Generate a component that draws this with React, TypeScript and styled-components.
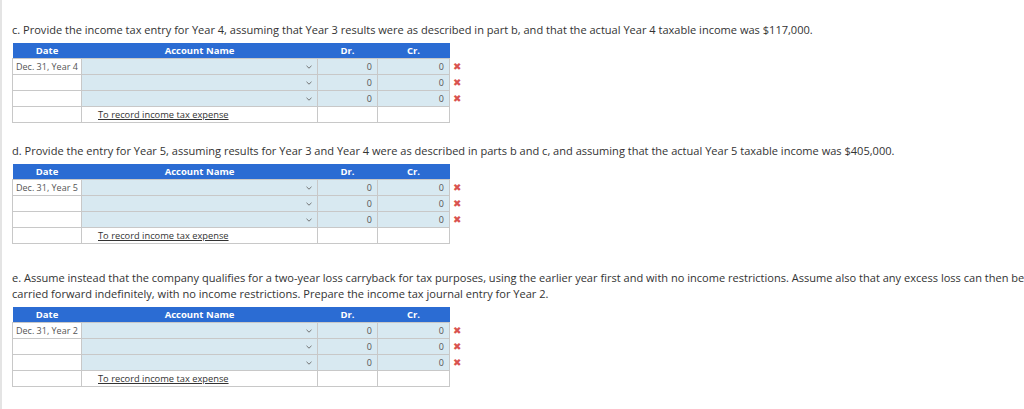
import React from 'react';
import styled, {createGlobalStyle} from 'styled-components';

const GlobalStyle = createGlobalStyle`
  html, body {
    margin: 0;
    padding: 0;
    overflow: hidden;
    background: #fff;
  }
  body {
    font-family: "Open Sans", "Liberation Sans", Arial, sans-serif;
    color: #333;
  }
`;

const Page = styled.div`
  width: 1060px;
  min-height: 409px;
  border-left: 2px solid #e4e4e4;
  padding: 22px 0 0 10px;
  box-sizing: border-box;
`;

const Section = styled.div<{ gap: number }>`
  margin-bottom: ${p => p.gap}px;
`;

const Prompt = styled.p`
  margin: 0 0 5px;
  width: 1034px;
  font-size: 11.06px;
  line-height: 16px;
  color: #333;
`;

const Journal = styled.table`
  border-collapse: collapse;
  table-layout: fixed;
  width: 451px;
  font-size: 9px;
`;

const HeadCell = styled.th<{ w: number }>`
  width: ${p => p.w}px;
  height: 15px;
  padding: 0;
  background: #2b6cd3;
  color: #fff;
  font-weight: 700;
  font-size: 9.5px;
  text-align: center;
`;

const Blank = styled.th`
  width: 14px;
  background: #fff;
`;

const Cell = styled.td<{ filled?: boolean; align?: string }>`
  height: 15px;
  padding: 0 5px 0 3px;
  border: 1px solid #c8c8c8;
  background: ${p => (p.filled ? '#d8e9f1' : '#fff')};
  text-align: ${p => p.align || 'left'};
  color: #555;
  white-space: nowrap;
  overflow: hidden;
`;

const DateCell = styled(Cell)`
  padding: 0 0 0 3px;
`;

const SelectBox = styled.div`
  display: flex;
  justify-content: flex-end;
  align-items: center;
  color: #777;
`;

const Memo = styled.span`
  margin-left: 13px;
  color: #333;
  font-size: 9.3px;
  text-decoration: underline;
`;

const Wrong = styled.td`
  padding: 0 0 0 3px;
  border: none;
  color: #d9534f;
  font-size: 9.5px;
`;

function Chevron() {
    return (
        <svg width="6" height="4" viewBox="0 0 6 4">
            <path d="M0.5 0.8 L3 3.2 L5.5 0.8" fill="none" stroke="#666" strokeWidth="0.9"/>
        </svg>
    );
}

type Entry = { key: string; prompt: string; date: string; gap: number };

const entries: Entry[] = [
    {
        key: 'c',
        prompt: 'c. Provide the income tax entry for Year 4, assuming that Year 3 results were as described in part b, and that the actual Year 4 taxable income was $117,000.',
        date: 'Dec. 31, Year 4',
        gap: 20,
    },
    {
        key: 'd',
        prompt: 'd. Provide the entry for Year 5, assuming results for Year 3 and Year 4 were as described in parts b and c, and assuming that the actual Year 5 taxable income was $405,000.',
        date: 'Dec. 31, Year 5',
        gap: 26,
    },
    {
        key: 'e',
        prompt: 'e. Assume instead that the company qualifies for a two-year loss carryback for tax purposes, using the earlier year first and with no income restrictions. Assume also that any excess loss can then be carried forward indefinitely, with no income restrictions. Prepare the income tax journal entry for Year 2.',
        date: 'Dec. 31, Year 2',
        gap: 0,
    },
];

function JournalTable({date}: { date: string }) {
    return (
        <Journal>
            <thead>
            <tr>
                <HeadCell w={69}>Date</HeadCell>
                <HeadCell w={236}>Account Name</HeadCell>
                <HeadCell w={60}>Dr.</HeadCell>
                <HeadCell w={72}>Cr.</HeadCell>
                <Blank/>
            </tr>
            </thead>
            <tbody>
            {[0, 1, 2].map(i =>
                <tr key={i}>
                    <DateCell>{i === 0 ? date : ''}</DateCell>
                    <Cell filled>
                        <SelectBox><Chevron/></SelectBox>
                    </Cell>
                    <Cell filled align="right">0</Cell>
                    <Cell filled align="right">0</Cell>
                    <Wrong>✖</Wrong>
                </tr>
            )}
            <tr>
                <DateCell/>
                <Cell><Memo>To record income tax expense</Memo></Cell>
                <Cell/>
                <Cell/>
                <Wrong/>
            </tr>
            </tbody>
        </Journal>
    );
}

export default function App() {
    return (
        <Page>
            <GlobalStyle/>
            {entries.map(e =>
                <Section key={e.key} gap={e.gap}>
                    <Prompt>{e.prompt}</Prompt>
                    <JournalTable date={e.date}/>
                </Section>
            )}
        </Page>
    );
}
